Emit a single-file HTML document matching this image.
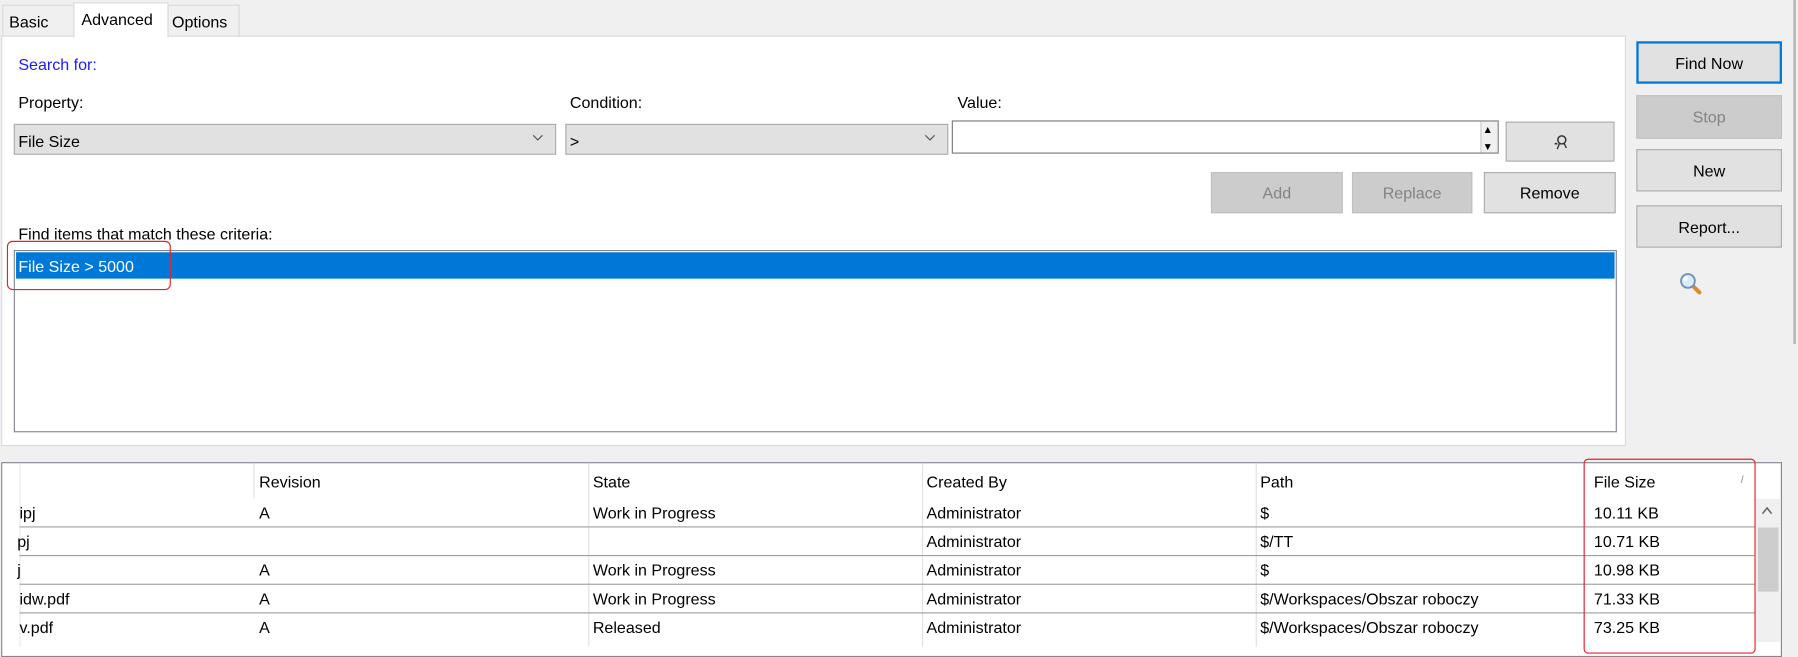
<!DOCTYPE html>
<html><head><meta charset="utf-8"><style>
html,body{margin:0;padding:0;width:1798px;height:638px;overflow:hidden;background:#f0f0f0}
#w{position:absolute;left:0;top:0;width:1568px;height:556px;transform:scale(1.1467);transform-origin:0 0;font-family:"Liberation Sans",sans-serif;font-size:14px;color:#000}
.a{position:absolute;box-sizing:border-box}
.t{position:absolute;white-space:nowrap;line-height:16px}
.btn{position:absolute;box-sizing:border-box;background:#e1e1e1;border:1px solid #adadad;display:flex;align-items:center;justify-content:center;font-size:14px}
.dis{background:#cccccc;border-color:#bfbfbf;color:#838383}
.combo{position:absolute;box-sizing:border-box;background:#e1e1e1;border:1px solid #adadad;font-size:14px;padding:6px 3px}
.chev{position:absolute;right:10px;top:8px}
.vl{position:absolute;width:1px;background:#e0e0e0}
.hl{position:absolute;height:1px;background:#a0a0a0;left:17px;width:1513px}
</style></head><body><div id="w">
<div class="a" style="left:2px;top:4px;width:63px;height:28px;border:1px solid #d9d9d9;border-bottom:none;background:#f0f0f0"></div>
<div class="t" style="left:8px;top:11px">Basic</div>
<div class="a" style="left:146px;top:4px;width:63px;height:28px;border:1px solid #d9d9d9;border-bottom:none;background:#f0f0f0"></div>
<div class="t" style="left:150px;top:11px">Options</div>
<div class="a" style="left:1px;top:31px;width:1417px;height:358px;background:#fff;border:1px solid #d9d9d9"></div>
<div class="a" style="left:64px;top:2px;width:83px;height:31px;border:1px solid #d9d9d9;border-bottom:none;background:#fff"></div>
<div class="t" style="left:71px;top:9px">Advanced</div>
<div class="t" style="left:16px;top:48px;color:#1a1aff">Search for:</div>
<div class="t" style="left:16px;top:81px">Property:</div>
<div class="t" style="left:497px;top:81px">Condition:</div>
<div class="t" style="left:835px;top:81px">Value:</div>
<div class="combo" style="left:12px;top:108px;width:473px;height:27px">File Size<svg class="chev" width="10" height="6" viewBox="0 0 10 6"><path d="M1 1L5 5L9 1" fill="none" stroke="#555"/></svg></div>
<div class="combo" style="left:493px;top:108px;width:334px;height:27px">&gt;<svg class="chev" width="10" height="6" viewBox="0 0 10 6"><path d="M1 1L5 5L9 1" fill="none" stroke="#555"/></svg></div>
<div class="a" style="left:830px;top:105px;width:477px;height:29px;background:#fff;border:1px solid #7a7a7a"></div>
<div class="a" style="left:1291px;top:106px;width:15px;height:27px;background:#f0f0f0;border-left:1px solid #ccc"></div>
<div class="t" style="left:1293px;top:105px;font-size:9px">&#9650;</div>
<div class="t" style="left:1293px;top:120px;font-size:9px">&#9660;</div>
<div class="btn" style="left:1313px;top:106px;width:95px;height:35px"><svg width="14" height="14" viewBox="0 0 14 14"><circle cx="8" cy="5" r="3.5" fill="none" stroke="#333" stroke-width="1.3"/><path d="M6 8L4 13M10 8L12 12M2 9q1-2 2 0" fill="none" stroke="#333" stroke-width="1.2"/></svg></div>
<div class="btn dis" style="left:1056px;top:150px;width:115px;height:36px">Add</div>
<div class="btn dis" style="left:1179px;top:150px;width:105px;height:36px">Replace</div>
<div class="btn" style="left:1294px;top:150px;width:115px;height:36px">Remove</div>
<div class="t" style="left:16px;top:196px">Find items that match these criteria:</div>
<div class="a" style="left:12px;top:218px;width:1398px;height:159px;border:1px solid #828790;background:#fff"></div>
<div class="a" style="left:14px;top:220px;width:1394px;height:23px;background:#0078d7"></div>
<div class="t" style="left:16px;top:224px;color:#fff">File Size &gt; 5000</div>
<div class="a" style="left:6px;top:210px;width:143px;height:43px;border:1.5px solid #e8202a;border-radius:5px"></div>
<div class="btn" style="left:1427px;top:36px;width:127px;height:37px;border:2px solid #0078d7">Find Now</div>
<div class="btn dis" style="left:1427px;top:83px;width:127px;height:38px">Stop</div>
<div class="btn" style="left:1427px;top:130px;width:127px;height:37px">New</div>
<div class="btn" style="left:1427px;top:179px;width:127px;height:37px">Report...</div>
<svg class="a" style="left:1463px;top:236px" width="24" height="24" viewBox="0 0 24 24"><line x1="13" y1="13" x2="19" y2="19" stroke="#e08a2a" stroke-width="3.5" stroke-linecap="round"/><circle cx="9" cy="9" r="6" fill="#d8ecff" stroke="#6f8fb5" stroke-width="1.6"/><circle cx="7" cy="7" r="2" fill="#fff"/></svg>
<div class="a" style="left:1564px;top:0;width:2px;height:300px;background:#b0b0b0"></div>
<div class="a" style="left:1px;top:403px;width:1553px;height:170px;background:#fff;border:1px solid #828790"></div>
<div class="a" style="left:17px;top:404px;width:1px;height:160px;background:#e8e8e8"></div>
<div class="vl" style="left:221px;top:404px;height:31px"></div>
<div class="vl" style="left:513px;top:404px;height:160px"></div>
<div class="vl" style="left:804px;top:404px;height:160px"></div>
<div class="vl" style="left:1095px;top:404px;height:160px"></div>
<div class="vl" style="left:1381px;top:404px;height:160px"></div>
<div class="t" style="left:226px;top:412px">Revision</div>
<div class="t" style="left:517px;top:412px">State</div>
<div class="t" style="left:808px;top:412px">Created By</div>
<div class="t" style="left:1099px;top:412px">Path</div>
<div class="t" style="left:1390px;top:412px">File Size</div>
<div class="t" style="left:1518px;top:410px;font-size:9px;color:#888">/</div>
<div class="hl" style="top:459px"></div><div class="hl" style="top:484px"></div><div class="hl" style="top:509px"></div><div class="hl" style="top:534px"></div>
<div class="t" style="left:17px;top:439px">ipj</div><div class="t" style="left:226px;top:439px">A</div><div class="t" style="left:517px;top:439px">Work in Progress</div><div class="t" style="left:808px;top:439px">Administrator</div><div class="t" style="left:1099px;top:439px">$</div><div class="t" style="left:1390px;top:439px">10.11 KB</div>
<div class="t" style="left:15px;top:464px">pj</div><div class="t" style="left:808px;top:464px">Administrator</div><div class="t" style="left:1099px;top:464px">$/TT</div><div class="t" style="left:1390px;top:464px">10.71 KB</div>
<div class="t" style="left:15px;top:489px">j</div><div class="t" style="left:226px;top:489px">A</div><div class="t" style="left:517px;top:489px">Work in Progress</div><div class="t" style="left:808px;top:489px">Administrator</div><div class="t" style="left:1099px;top:489px">$</div><div class="t" style="left:1390px;top:489px">10.98 KB</div>
<div class="t" style="left:17px;top:514px">idw.pdf</div><div class="t" style="left:226px;top:514px">A</div><div class="t" style="left:517px;top:514px">Work in Progress</div><div class="t" style="left:808px;top:514px">Administrator</div><div class="t" style="left:1099px;top:514px">$/Workspaces/Obszar roboczy</div><div class="t" style="left:1390px;top:514px">71.33 KB</div>
<div class="t" style="left:17px;top:539px">v.pdf</div><div class="t" style="left:226px;top:539px">A</div><div class="t" style="left:517px;top:539px">Released</div><div class="t" style="left:808px;top:539px">Administrator</div><div class="t" style="left:1099px;top:539px">$/Workspaces/Obszar roboczy</div><div class="t" style="left:1390px;top:539px">73.25 KB</div>
<div class="a" style="left:1530px;top:435px;width:23px;height:125px;background:#f0f0f0"></div>
<svg class="a" style="left:1536px;top:442px" width="10" height="7" viewBox="0 0 10 7"><path d="M1 6L5 1L9 6" fill="none" stroke="#606060" stroke-width="1.3"/></svg>
<div class="a" style="left:1533px;top:460px;width:18px;height:56px;background:#cdcdcd"></div>
<div class="a" style="left:1381px;top:400px;width:150px;height:170px;border:1.5px solid #e8202a;border-radius:4px"></div>
</div></body></html>
